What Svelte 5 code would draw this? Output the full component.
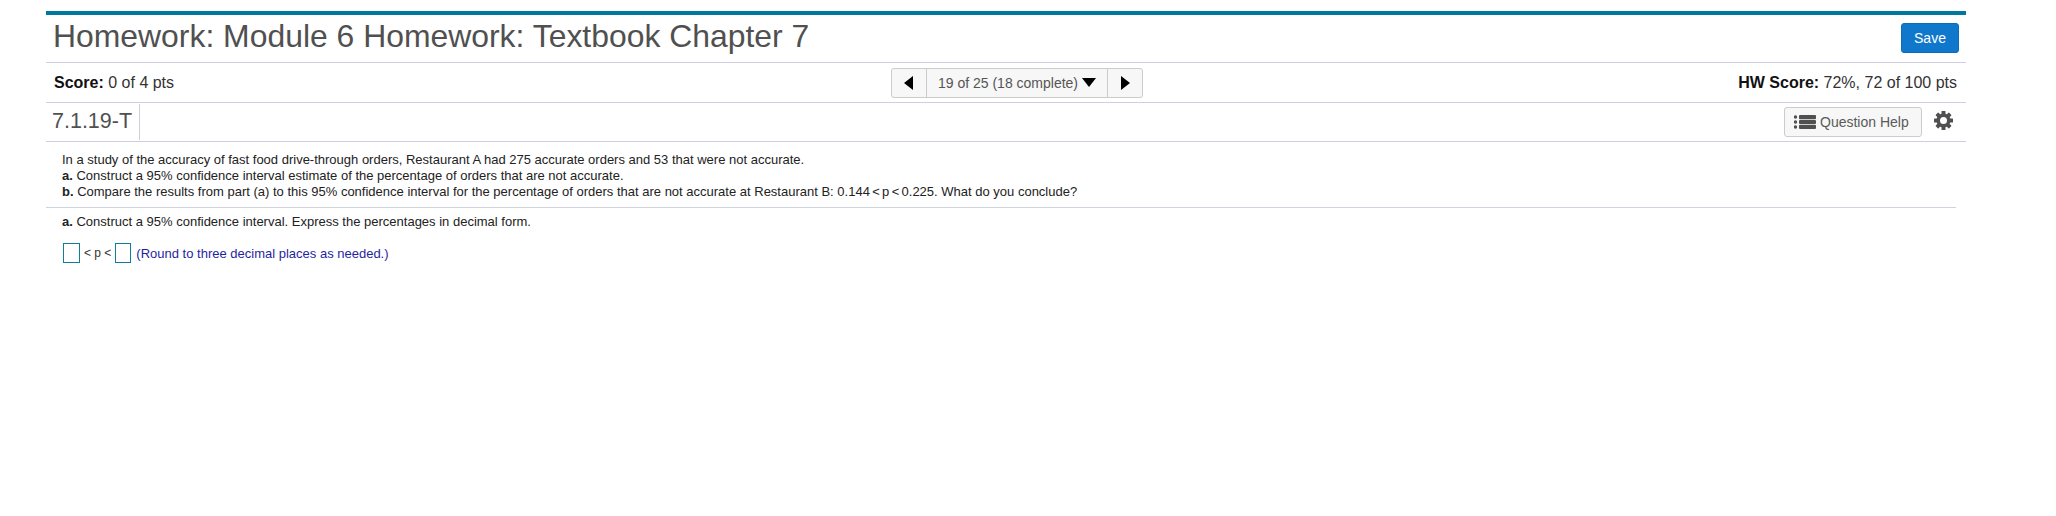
<script>
  const stem1 = 'In a study of the accuracy of fast food drive-through orders, Restaurant A had 275 accurate orders and 53 that were not accurate.';
  const stem2 = ' Construct a 95% confidence interval estimate of the percentage of orders that are not accurate.';
  const stem3 = ' Compare the results from part (a) to this 95% confidence interval for the percentage of orders that are not accurate at Restaurant B: ';
  const teeth = [0, 45, 90, 135, 180, 225, 270, 315];
</script>

<div class="page">
  <header class="title-row">
    <h1>Homework: Module 6 Homework: Textbook Chapter 7</h1>
    <button class="save">Save</button>
  </header>

  <div class="score-row">
    <div class="score"><b>Score:</b> 0 of 4 pts</div>
    <div class="pager">
      <span class="pg-btn prev"><svg width="10" height="14" viewBox="0 0 10 14"><path d="M9 0V14L0 7Z" /></svg></span>
      <span class="pg-mid">19 of 25 (18 complete)<svg width="14" height="9" viewBox="0 0 14 9"><path d="M0 0H14L7 9Z" /></svg></span>
      <span class="pg-btn next"><svg width="10" height="14" viewBox="0 0 10 14"><path d="M1 0V14L10 7Z" /></svg></span>
    </div>
    <div class="score right"><b>HW Score:</b> 72%, 72 of 100 pts</div>
  </div>

  <div class="q-row">
    <div class="q-id">7.1.19-T</div>
    <div class="q-tools">
      <button class="help">
        <svg width="22" height="14" viewBox="0 0 22 14" fill="#505050">
          <circle cx="1.5" cy="2" r="1.7" /><circle cx="1.5" cy="7" r="1.7" /><circle cx="1.5" cy="12" r="1.7" />
          <rect x="5" y="0" width="17" height="4.2" rx="1" /><rect x="5" y="4.9" width="17" height="4.2" rx="1" /><rect x="5" y="9.8" width="17" height="4.2" rx="1" />
        </svg>
        Question Help
      </button>
      <svg class="gear" width="19" height="19" viewBox="-9.5 -9.5 19 19" fill="#505050">
        <circle r="5.25" fill="none" stroke="#505050" stroke-width="3.5" />
        {#each teeth as a}
          <rect x="-2" y="-9.5" width="4" height="3.5" rx="0.6" transform="rotate({a})" />
        {/each}
      </svg>
    </div>
  </div>

  <section class="body">
    <div class="stem">
      <div>{stem1}</div>
      <div><b>a.</b>{stem2}</div>
      <div><b>b.</b>{stem3}<span class="math">0.144 &lt; p &lt; 0.225.</span> What do you conclude?</div>
    </div>
    <div class="part"><b>a.</b> Construct a 95% confidence interval. Express the percentages in decimal form.</div>
    <div class="answer">
      <span class="box"></span><span class="ineq">&lt; p &lt;</span><span class="box narrow"></span>
      <span class="hint">(Round to three decimal places as needed.)</span>
    </div>
  </section>
</div>

<style>
  :global(body) {
    margin: 0;
    background: #fff;
    font-family: "Liberation Sans", Arial, sans-serif;
    color: #222;
  }
  .page {
    width: 1920px;
    margin: 11px 0 0 46px;
    border-top: 4px solid #00779e;
  }
  .title-row {
    height: 48px;
    box-sizing: border-box;
    border-bottom: 1px solid #cfcfe0;
    display: flex;
    align-items: center;
    justify-content: space-between;
    padding: 0 7px 4px;
  }
  h1 {
    margin: 0;
    font-size: 31.9px;
    font-weight: 400;
    color: #505050;
    line-height: 1;
  }
  .save {
    width: 58px;
    height: 30px;
    border: 1px solid #0e6cb8;
    border-radius: 3px;
    background: #0f78cc;
    color: #fff;
    font: 14px "Liberation Sans", Arial, sans-serif;
    padding: 0;
    margin-top: 3px;
  }
  .score-row {
    height: 40px;
    box-sizing: border-box;
    border-bottom: 1px solid #cfcfe0;
    display: grid;
    grid-template-columns: 837px auto 1fr;
    align-items: center;
    padding: 0 9px 0 8px;
  }
  .score {
    font-size: 16px;
    color: #333;
  }
  .score b { color: #111; }
  .right { text-align: right; }
  .pager {
    display: flex;
    height: 30px;
    box-sizing: border-box;
    border: 1px solid #ccc;
    border-radius: 3px;
    background: #f7f7f7;
    color: #555;
    font-size: 14px;
    align-items: stretch;
  }
  .pg-btn {
    width: 34px;
    display: flex;
    align-items: center;
    justify-content: center;
  }
  .pg-mid {
    width: 180px;
    border-left: 1px solid #ccc;
    border-right: 1px solid #ccc;
    display: flex;
    align-items: center;
    justify-content: center;
    gap: 4px;
  }
  .pager path { fill: #000; }
  .q-row {
    height: 39px;
    box-sizing: border-box;
    border-bottom: 1px solid #cfcfe0;
    display: flex;
    justify-content: space-between;
    padding-top: 1px;
  }
  .q-id {
    width: 94px;
    height: 36px;
    box-sizing: border-box;
    border-right: 1px solid #cfcfe0;
    font-size: 21.5px;
    line-height: 35px;
    color: #505050;
    padding-left: 6px;
    white-space: nowrap;
  }
  .q-tools {
    display: flex;
    align-items: flex-start;
    padding-right: 13px;
    gap: 12px;
  }
  .help {
    width: 138px;
    height: 30px;
    margin-top: 3px;
    border: 1px solid #ccc;
    border-radius: 3px;
    background: #f7f7f7;
    color: #5a5a5a;
    font: 14px "Liberation Sans", Arial, sans-serif;
    display: flex;
    align-items: center;
    gap: 4px;
    padding: 0 0 0 9px;
  }
  .gear { margin-top: 7px; }
  .body {
    padding: 10px 10px 0 16px;
    font-size: 13px;
    color: #222;
  }
  .stem {
    line-height: 16px;
    padding-bottom: 7px;
    margin-left: -16px;
    padding-left: 16px;
    border-bottom: 1px solid #cfd3e0;
  }
  .math { word-spacing: -1.3px; }
  .part {
    line-height: 16px;
    margin-top: 6px;
  }
  .answer {
    display: flex;
    align-items: center;
    margin-top: 13px;
    margin-left: 1px;
  }
  .box {
    width: 15px;
    height: 18px;
    border: 1px solid #0f7f98;
    display: block;
  }
  .box.narrow { width: 14px; }
  .ineq { margin: 0 4px 0 4px; color: #333; font-size: 12px; }
  .hint { margin-left: 5px; color: #1f1f9f; }
</style>
